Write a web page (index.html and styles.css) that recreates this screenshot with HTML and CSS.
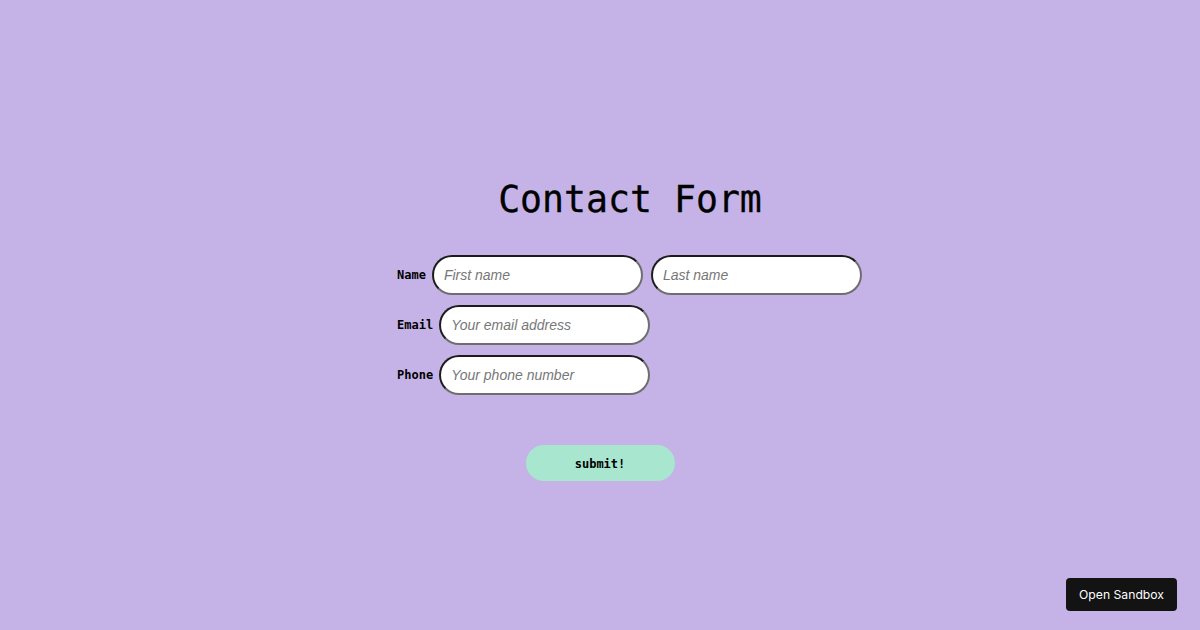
FILE: index.html
```html
<!DOCTYPE html>
<html lang="en">
<head>
  <meta charset="UTF-8" />
  <meta name="viewport" content="width=device-width, initial-scale=1.0"/>
  <title>Contact Form</title>
  <link rel="stylesheet" href="styles.css">
</head>
<body>

  <main class="contact">
    <form class="contact-form" id="contactForm">
      <div class="fields">
        <h1 class="title">Contact Form</h1>

        <div class="row">
          <label for="firstName">Name</label>
          <input type="text" id="firstName" name="firstName" placeholder="First name" />
          <input type="text" id="lastName" name="lastName" placeholder="Last name" />
        </div>

        <div class="row">
          <label for="email">Email</label>
          <input type="email" id="email" name="email" placeholder="Your email address" />
        </div>

        <div class="row">
          <label for="phone">Phone</label>
          <input type="tel" id="phone" name="phone" placeholder="Your phone number" />
        </div>
      </div>

      <div class="actions">
        <button type="submit" class="submit">submit!</button>
      </div>
    </form>
  </main>

  <a class="sandbox-link" href="#">Open Sandbox</a>

</body>
</html>
```

FILE: styles.css
```css
* {
  box-sizing: border-box;
}

html, body {
  margin: 0;
  padding: 0;
  height: 100%;
}

body {
  background: #c5b3e7;
  font-family: "DejaVu Sans Mono", "Liberation Mono", monospace;
  color: #000;
  overflow: hidden;
}

.contact {
  padding-top: 179px;
}

.contact-form {
  width: 526px;
  margin: 0 auto;
}

.fields {
  padding-left: 60px;
  display: flex;
  flex-direction: column;
  gap: 10px;
}

.title {
  margin: 0 0 24px;
  font-size: 36.5px;
  line-height: 42px;
  font-weight: normal;
  text-align: center;
  -webkit-text-stroke: 0.3px #000;
}

.row {
  display: flex;
  align-items: center;
  gap: 6px;
}

.row label {
  font-size: 12px;
  font-weight: bold;
}

.row input + input {
  margin-left: 2px;
}

input {
  width: 211px;
  height: 40px;
  padding: 0 10px 1px;
  border: 2px solid;
  border-color: #1c1c1c #6e6e6e #6e6e6e #1c1c1c;
  border-radius: 20px;
  background: #fff;
  font-family: "Liberation Sans", Arial, sans-serif;
  font-size: 14px;
  font-style: italic;
  outline: none;
}

input::placeholder {
  color: #777;
}

.actions {
  display: flex;
  justify-content: center;
  margin-top: 50px;
}

.submit {
  width: 149px;
  height: 36px;
  padding-top: 2px;
  border: none;
  border-radius: 18px;
  background: #a8e6cf;
  font-family: "DejaVu Sans Mono", monospace;
  font-size: 12px;
  font-weight: bold;
  color: #000;
  cursor: pointer;
}

.sandbox-link {
  position: fixed;
  right: 23px;
  bottom: 19px;
  padding: 0 13px;
  height: 33px;
  line-height: 33px;
  border-radius: 4px;
  background: #131313;
  color: #fff;
  font-family: Inter, "Liberation Sans", sans-serif;
  font-size: 12.2px;
  text-decoration: none;
}
```
